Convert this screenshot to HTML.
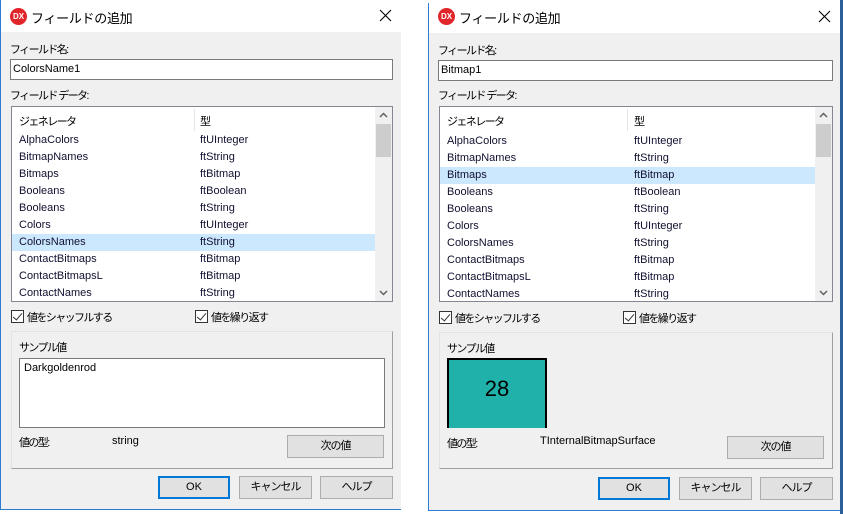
<!DOCTYPE html>
<html><head><meta charset="utf-8"><style>
*{box-sizing:border-box;margin:0;padding:0}
body{width:843px;height:514px;background:#fff;position:relative;overflow:hidden;font-family:"Liberation Sans","Noto Sans CJK JP",sans-serif;font-size:11px;color:#000}
.dlg{position:absolute;background:#f0f0f0;border-left:1px solid #2b7bd0;border-bottom:1px solid #2b7bd0}
.ab{position:absolute}
.jp{font-size:11px;letter-spacing:-1.6px}
.title{position:absolute;left:0;right:0;top:0;height:32px;background:#fff}
.ico{position:absolute;left:9px;top:8px;width:17px;height:17px;border-radius:50%;background:#e0262b;color:#fff;font-size:8px;font-weight:bold;line-height:17px;text-align:center}
.ttl{position:absolute;left:30px;top:8px;font-size:13px;letter-spacing:-0.3px}
.x{position:absolute;right:9px;top:9px;width:13px;height:13px}
.inp{position:absolute;height:21px;background:#fff;border:1px solid #7a7a7a;padding:3px 0 0 2px;font-size:11px}
.list{position:absolute;background:#fff;border:1px solid #828790}
.hdr{position:absolute;top:0;height:24px;left:0;padding:6px 0 0 7px}
.row{position:absolute;left:0;height:17px;line-height:17px;padding-left:7px;color:#101030}
.row span{position:absolute}
.sel{background:#cce8ff}
.sb{position:absolute;top:0;right:0;width:17px;bottom:0;background:#f0f0f0}
.thumb{position:absolute;left:1px;right:1px;top:17px;height:33px;background:#cdcdcd}
.cb{position:absolute;width:13px;height:13px;border:1px solid #333;background:#fff}
.cb:after{content:"";position:absolute;left:3px;top:0px;width:4px;height:8px;border:solid #333;border-width:0 1.5px 1.5px 0;transform:rotate(40deg)}
.panel{position:absolute;border-right:1px solid #a0a0a0;border-bottom:1px solid #a0a0a0;border-top:1px solid #e3e3e3;border-left:1px solid #e3e3e3}
.btn{position:absolute;height:23px;background:#e1e1e1;border:1px solid #adadad;text-align:center;line-height:21px;font-size:11px;letter-spacing:-1px}
.ok{border:2px solid #0078d7;line-height:19px;letter-spacing:0}
</style></head><body>

<!-- LEFT DIALOG -->
<div class="dlg" style="left:0;top:0;width:401px;height:510px">
 <div class="title"><div class="ico">DX</div><div class="ttl">フィールドの追加</div>
  <svg class="x" viewBox="0 0 13 13"><path d="M1 1L12 12M12 1L1 12" stroke="#000" stroke-width="1.1"/></svg></div>
 <div class="ab jp" style="left:9px;top:41px">フィールド名:</div>
 <div class="inp" style="left:9px;top:59px;right:8px">ColorsName1</div>
 <div class="ab jp" style="left:9px;top:87px">フィールド データ:</div>
 <div class="list" style="left:10px;top:106px;right:8px;height:196px">
  <div class="hdr jp">ジェネレータ</div>
  <div class="ab" style="left:182px;top:2px;width:1px;height:22px;background:#e5e5e5"></div>
  <div class="ab" style="left:188px;top:6px">型</div>
  <div class="row" style="top:25px;width:364px"><span>AlphaColors</span><span style="left:188px">ftUInteger</span></div>
  <div class="row" style="top:42px;width:364px"><span>BitmapNames</span><span style="left:188px">ftString</span></div>
  <div class="row" style="top:59px;width:364px"><span>Bitmaps</span><span style="left:188px">ftBitmap</span></div>
  <div class="row" style="top:76px;width:364px"><span>Booleans</span><span style="left:188px">ftBoolean</span></div>
  <div class="row" style="top:93px;width:364px"><span>Booleans</span><span style="left:188px">ftString</span></div>
  <div class="row" style="top:110px;width:364px"><span>Colors</span><span style="left:188px">ftUInteger</span></div>
  <div class="row sel" style="top:127px;width:364px"><span>ColorsNames</span><span style="left:188px">ftString</span></div>
  <div class="row" style="top:144px;width:364px"><span>ContactBitmaps</span><span style="left:188px">ftBitmap</span></div>
  <div class="row" style="top:161px;width:364px"><span>ContactBitmapsL</span><span style="left:188px">ftBitmap</span></div>
  <div class="row" style="top:178px;width:364px;height:16px;overflow:hidden"><span>ContactNames</span><span style="left:188px">ftString</span></div>
  <div class="sb"><div class="thumb"></div>
   <svg class="ab" style="left:4px;top:5px" width="9" height="6"><path d="M1 5L4.5 1.5L8 5" stroke="#606060" stroke-width="1.5" fill="none"/></svg>
   <svg class="ab" style="left:4px;bottom:5px" width="9" height="6"><path d="M1 1L4.5 4.5L8 1" stroke="#606060" stroke-width="1.5" fill="none"/></svg>
  </div>
 </div>
 <div class="cb" style="left:10px;top:310px"></div><div class="ab jp" style="left:26px;top:309px">値をシャッフルする</div>
 <div class="cb" style="left:194px;top:310px"></div><div class="ab jp" style="left:210px;top:309px">値を繰り返す</div>
 <div class="panel" style="left:10px;top:331px;right:8px;height:138px"></div>
 <div class="ab jp" style="left:18px;top:339px">サンプル値</div>
 <div class="ab" style="left:18px;top:358px;width:366px;height:70px;background:#fff;border:1px solid #7a7a7a;padding:3px 4px">Darkgoldenrod</div>
 <div class="ab jp" style="left:18px;top:434px">値の型:</div>
 <div class="ab" style="left:111px;top:435px">string</div>
 <div class="btn" style="left:286px;top:435px;width:97px">次の値</div>
 <div class="btn ok" style="left:157px;top:476px;width:72px">OK</div>
 <div class="btn" style="left:238px;top:476px;width:73px">キャンセル</div>
 <div class="btn" style="left:319px;top:476px;width:73px">ヘルプ</div>
</div>

<!-- RIGHT DIALOG -->
<div class="dlg" style="left:428px;top:3px;width:412px;height:508px">
 <div class="title" style="height:30px"><div class="ico" style="top:5px">DX</div><div class="ttl" style="top:5px">フィールドの追加</div>
  <svg class="x" style="top:7px" viewBox="0 0 13 13"><path d="M1 1L12 12M12 1L1 12" stroke="#000" stroke-width="1.1"/></svg></div>
 <div class="ab jp" style="left:9px;top:39px">フィールド名:</div>
 <div class="inp" style="left:9px;top:57px;right:7px">Bitmap1</div>
 <div class="ab jp" style="left:9px;top:84px">フィールド データ:</div>
 <div class="list" style="left:10px;top:103px;right:7px;height:196px">
  <div class="hdr jp">ジェネレータ</div>
  <div class="ab" style="left:187px;top:2px;width:1px;height:22px;background:#e5e5e5"></div>
  <div class="ab" style="left:194px;top:6px">型</div>
  <div class="row" style="top:26px;width:376px"><span>AlphaColors</span><span style="left:194px">ftUInteger</span></div>
  <div class="row" style="top:43px;width:376px"><span>BitmapNames</span><span style="left:194px">ftString</span></div>
  <div class="row sel" style="top:60px;width:376px"><span>Bitmaps</span><span style="left:194px">ftBitmap</span></div>
  <div class="row" style="top:77px;width:376px"><span>Booleans</span><span style="left:194px">ftBoolean</span></div>
  <div class="row" style="top:94px;width:376px"><span>Booleans</span><span style="left:194px">ftString</span></div>
  <div class="row" style="top:111px;width:376px"><span>Colors</span><span style="left:194px">ftUInteger</span></div>
  <div class="row" style="top:128px;width:376px"><span>ColorsNames</span><span style="left:194px">ftString</span></div>
  <div class="row" style="top:145px;width:376px"><span>ContactBitmaps</span><span style="left:194px">ftBitmap</span></div>
  <div class="row" style="top:162px;width:376px"><span>ContactBitmapsL</span><span style="left:194px">ftBitmap</span></div>
  <div class="row" style="top:179px;width:376px;height:15px;overflow:hidden"><span>ContactNames</span><span style="left:194px">ftString</span></div>
  <div class="sb"><div class="thumb"></div>
   <svg class="ab" style="left:4px;top:5px" width="9" height="6"><path d="M1 5L4.5 1.5L8 5" stroke="#606060" stroke-width="1.5" fill="none"/></svg>
   <svg class="ab" style="left:4px;bottom:5px" width="9" height="6"><path d="M1 1L4.5 4.5L8 1" stroke="#606060" stroke-width="1.5" fill="none"/></svg>
  </div>
 </div>
 <div class="cb" style="left:10px;top:308px"></div><div class="ab jp" style="left:26px;top:307px">値をシャッフルする</div>
 <div class="cb" style="left:194px;top:308px"></div><div class="ab jp" style="left:210px;top:307px">値を繰り返す</div>
 <div class="panel" style="left:10px;top:329px;right:7px;height:137px"></div>
 <div class="ab jp" style="left:18px;top:337px">サンプル値</div>
 <div class="ab" style="left:18px;top:355px;width:100px;height:70px;background:#20b2aa;border:2px solid #000;border-bottom:none;text-align:center;padding-top:16px;font-size:22px">28</div>
 <div class="ab jp" style="left:18px;top:432px">値の型:</div>
 <div class="ab" style="left:111px;top:432px">TInternalBitmapSurface</div>
 <div class="btn" style="left:298px;top:433px;width:97px">次の値</div>
 <div class="btn ok" style="left:169px;top:474px;width:72px">OK</div>
 <div class="btn" style="left:250px;top:474px;width:73px">キャンセル</div>
 <div class="btn" style="left:331px;top:474px;width:73px">ヘルプ</div>
</div>
<div class="ab" style="left:840px;top:0;width:3px;height:514px;background:#2b5f9a"></div>
</body></html>
